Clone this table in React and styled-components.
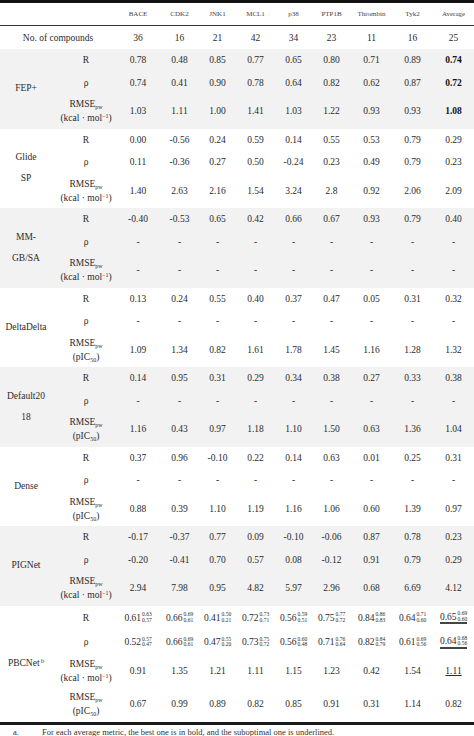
import React from "react";
import styled, { createGlobalStyle, css } from "styled-components";

const GlobalStyle = createGlobalStyle`
  html, body {
    margin: 0;
    padding: 0;
    background: #fff;
  }
  body {
    font-family: "Liberation Serif", "DejaVu Serif", serif;
    color: #2b2b2b;
  }
`;

const COLS = "56px 60px 44px 39px 37px 39px 37px 39px 41px 41px 41px";

const targets = ["BACE", "CDK2", "JNK1", "MCL1", "p38", "PTP1B", "Thrombin", "Tyk2", "Average"];
const counts = [36, 16, 21, 42, 34, 23, 11, 16, 25];
const dash = Array(9).fill("-");

const s = (v, hi, lo) => ({ v, hi, lo });

const groups = [
  {
    name: ["FEP+"],
    shade: true,
    rows: [
      { metric: "R", values: ["0.78", "0.48", "0.85", "0.77", "0.65", "0.80", "0.71", "0.89", "0.74"], bold: true },
      { metric: "rho", values: ["0.74", "0.41", "0.90", "0.78", "0.64", "0.82", "0.62", "0.87", "0.72"], bold: true },
      { metric: "kcal", values: ["1.03", "1.11", "1.00", "1.41", "1.03", "1.22", "0.93", "0.93", "1.08"], bold: true },
    ],
  },
  {
    name: ["Glide", "SP"],
    rows: [
      { metric: "R", values: ["0.00", "-0.56", "0.24", "0.59", "0.14", "0.55", "0.53", "0.79", "0.29"] },
      { metric: "rho", values: ["0.11", "-0.36", "0.27", "0.50", "-0.24", "0.23", "0.49", "0.79", "0.23"] },
      { metric: "kcal", values: ["1.40", "2.63", "2.16", "1.54", "3.24", "2.8", "0.92", "2.06", "2.09"] },
    ],
  },
  {
    name: ["MM-", "GB/SA"],
    shade: true,
    rows: [
      { metric: "R", values: ["-0.40", "-0.53", "0.65", "0.42", "0.66", "0.67", "0.93", "0.79", "0.40"] },
      { metric: "rho", values: dash },
      { metric: "kcal", values: dash },
    ],
  },
  {
    name: ["DeltaDelta"],
    rows: [
      { metric: "R", values: ["0.13", "0.24", "0.55", "0.40", "0.37", "0.47", "0.05", "0.31", "0.32"] },
      { metric: "rho", values: dash },
      { metric: "pic", values: ["1.09", "1.34", "0.82", "1.61", "1.78", "1.45", "1.16", "1.28", "1.32"] },
    ],
  },
  {
    name: ["Default20", "18"],
    shade: true,
    rows: [
      { metric: "R", values: ["0.14", "0.95", "0.31", "0.29", "0.34", "0.38", "0.27", "0.33", "0.38"] },
      { metric: "rho", values: dash },
      { metric: "pic", values: ["1.16", "0.43", "0.97", "1.18", "1.10", "1.50", "0.63", "1.36", "1.04"] },
    ],
  },
  {
    name: ["Dense"],
    rows: [
      { metric: "R", values: ["0.37", "0.96", "-0.10", "0.22", "0.14", "0.63", "0.01", "0.25", "0.31"] },
      { metric: "rho", values: dash },
      { metric: "pic", values: ["0.88", "0.39", "1.10", "1.19", "1.16", "1.06", "0.60", "1.39", "0.97"] },
    ],
  },
  {
    name: ["PIGNet"],
    shade: true,
    rows: [
      { metric: "R", values: ["-0.17", "-0.37", "0.77", "0.09", "-0.10", "-0.06", "0.87", "0.78", "0.23"] },
      { metric: "rho", values: ["-0.20", "-0.41", "0.70", "0.57", "0.08", "-0.12", "0.91", "0.79", "0.29"] },
      { metric: "kcal", values: ["2.94", "7.98", "0.95", "4.82", "5.97", "2.96", "0.68", "6.69", "4.12"] },
    ],
  },
  {
    name: ["PBCNet"],
    note: "b",
    sizes: "24px 25px 32px 35px",
    rows: [
      {
        metric: "R",
        underline: 2,
        values: [
          s("0.61", "0.63", "0.57"), s("0.66", "0.69", "0.61"), s("0.41", "0.50", "0.21"),
          s("0.72", "0.73", "0.71"), s("0.56", "0.59", "0.51"), s("0.75", "0.77", "0.72"),
          s("0.84", "0.86", "0.83"), s("0.64", "0.71", "0.60"), s("0.65", "0.69", "0.60"),
        ],
      },
      {
        metric: "rho",
        underline: 2,
        values: [
          s("0.52", "0.57", "0.47"), s("0.66", "0.69", "0.61"), s("0.47", "0.55", "0.20"),
          s("0.73", "0.75", "0.72"), s("0.56", "0.60", "0.48"), s("0.71", "0.76", "0.64"),
          s("0.82", "0.84", "0.79"), s("0.61", "0.69", "0.56"), s("0.64", "0.68", "0.56"),
        ],
      },
      { metric: "kcal", underline: 1, values: ["0.91", "1.35", "1.21", "1.11", "1.15", "1.23", "0.42", "1.54", "1.11"] },
      { metric: "pic", values: ["0.67", "0.99", "0.89", "0.82", "0.85", "0.91", "0.31", "1.14", "0.82"] },
    ],
  },
];

const Page = styled.div`
  width: 474px;
`;

const Table = styled.div`
  border-top: 3px solid #111;
  border-bottom: 3px solid #1a1a1a;
`;

const HeaderRow = styled.div`
  display: grid;
  grid-template-columns: ${COLS};
  height: 22px;
  align-items: center;
  border-bottom: 1px solid #333;
`;

const HeadCell = styled.div`
  grid-column: ${(p) => p.$col};
  text-align: center;
  font-size: 7px;
  color: #444;
  white-space: nowrap;
`;

const CountRow = styled.div`
  display: grid;
  grid-template-columns: ${COLS};
  height: 23px;
  align-items: center;
`;

const CountLabel = styled.div`
  grid-column: 1 / span 2;
  text-align: center;
  font-size: 9.5px;
`;

const Group = styled.div`
  display: grid;
  grid-template-columns: ${COLS};
  grid-template-rows: ${(p) => p.$sizes};
  background: ${(p) => (p.$shade ? "#f2f2f2" : "#fff")};
`;

const GroupLabel = styled.div`
  grid-column: 1;
  grid-row: 1 / -1;
  display: flex;
  flex-direction: column;
  justify-content: center;
  align-items: center;
  padding-right: 4px;
  font-size: 9.5px;
  line-height: 21px;
  white-space: nowrap;
`;

const Metric = styled.div`
  display: flex;
  flex-direction: column;
  align-items: center;
  justify-content: center;
  font-size: 9.5px;
  line-height: 14px;
  white-space: nowrap;
`;

const Cell = styled.div`
  display: flex;
  align-items: center;
  justify-content: center;
  font-size: 9.5px;
  white-space: nowrap;
  font-weight: ${(p) => (p.$bold ? 700 : 400)};
  color: ${(p) => (p.$bold ? "#111" : "#2b2b2b")};
`;

const Sub = styled.sub`
  font-size: 6px;
  vertical-align: -2px;
  line-height: 0;
`;

const Sup = styled.sup`
  font-size: 6px;
  vertical-align: 3px;
  line-height: 0;
`;

const Value = styled.span`
  display: inline-flex;
  align-items: center;
  ${(p) =>
    p.$u === 2 &&
    css`
      border-bottom: 2px solid #444;
    `}
  ${(p) =>
    p.$u === 1 &&
    css`
      text-decoration: underline;
      text-underline-offset: 1px;
    `}
`;

const Limits = styled.span`
  display: inline-flex;
  flex-direction: column;
  margin-left: 1px;
  font-size: 5.5px;
  line-height: 5.5px;
`;

const Footnote = styled.div`
  display: flex;
  padding: 2px 0 0 13px;
  font-size: 8.5px;
  color: #333;
  white-space: nowrap;
`;

const FootMark = styled.span`
  width: 29px;
`;

function MetricLabel({ type }) {
  if (type === "R") return <Metric>R</Metric>;
  if (type === "rho") return <Metric>ρ</Metric>;
  return (
    <Metric>
      <span>
        RMSE<Sub>pw</Sub>
      </span>
      {type === "kcal" ? (
        <span>
          (kcal · mol<Sup>−1</Sup>)
        </span>
      ) : (
        <span>
          (pIC<Sub>50</Sub>)
        </span>
      )}
    </Metric>
  );
}

function ValueCell({ value, bold, underline }) {
  if (typeof value === "object") {
    return (
      <Cell>
        <Value $u={underline}>
          {value.v}
          <Limits>
            <span>{value.hi}</span>
            <span>{value.lo}</span>
          </Limits>
        </Value>
      </Cell>
    );
  }
  return (
    <Cell $bold={bold}>
      {underline ? <Value $u={underline}>{value}</Value> : value}
    </Cell>
  );
}

export default function App() {
  return (
    <Page>
      <GlobalStyle />
      <Table>
        <HeaderRow>
          {targets.map((t, i) => (
            <HeadCell key={t} $col={i + 3}>
              {t}
            </HeadCell>
          ))}
        </HeaderRow>
        <CountRow>
          <CountLabel>No. of compounds</CountLabel>
          {counts.map((c, i) => (
            <Cell key={i}>{c}</Cell>
          ))}
        </CountRow>
        {groups.map((g) => (
          <Group key={g.name.join("")} $shade={g.shade} $sizes={g.sizes || "22px 23px 34.5px"}>
            <GroupLabel>
              {g.name.map((line, i) => (
                <span key={i}>
                  {line}
                  {g.note && i === g.name.length - 1 && <Sup> {g.note}</Sup>}
                </span>
              ))}
            </GroupLabel>
            {g.rows.map((r, ri) => (
              <React.Fragment key={ri}>
                <MetricLabel type={r.metric} />
                {r.values.map((v, vi) => (
                  <ValueCell
                    key={vi}
                    value={v}
                    bold={r.bold && vi === 8}
                    underline={vi === 8 ? r.underline : 0}
                  />
                ))}
              </React.Fragment>
            ))}
          </Group>
        ))}
      </Table>
      <Footnote>
        <FootMark>a.</FootMark>
        <span>For each average metric, the best one is in bold, and the suboptimal one is underlined.</span>
      </Footnote>
    </Page>
  );
}
